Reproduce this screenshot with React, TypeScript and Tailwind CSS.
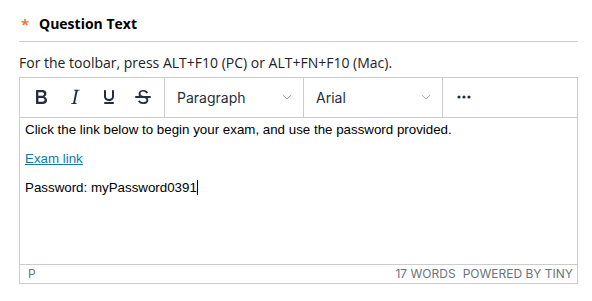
import React from 'react';

const ICON = '#222f3e';

const BoldIcon = () => (
    <svg width="24" height="24" viewBox="0 0 24 24" fill={ICON}>
        <path d="M7.8 19c-.3 0-.5 0-.6-.2l-.2-.5V5.7c0-.2 0-.4.2-.5l.6-.2h5c1.5 0 2.7.3 3.5 1 .7.6 1.1 1.4 1.1 2.5a3 3 0 01-.6 1.9c-.4.6-1 1-1.6 1.2.4.1.9.3 1.3.6s.8.7 1 1.2c.4.4.5 1 .5 1.6 0 1.3-.4 2.3-1.3 3-.8.7-2.1 1-3.8 1H7.8zm5-8.3c.6 0 1.2-.1 1.6-.5.4-.3.6-.7.6-1.3 0-1.1-.8-1.7-2.3-1.7H9.3v3.5h3.4zm.5 6c.7 0 1.3-.1 1.7-.4.4-.4.6-.9.6-1.5s-.2-1-.7-1.4c-.4-.3-1-.4-2-.4H9.4v3.8h4z" fillRule="evenodd" />
    </svg>
);

const ItalicIcon = () => (
    <svg width="24" height="24" viewBox="0 0 24 24" fill={ICON}>
        <path d="M16.7 4.7l-.1.9h-.3c-.6 0-1 0-1.4.3-.3.3-.4.6-.5 1.1l-2.1 9.8v.6c0 .5.4.8 1.4.8h.2l-.2.8H8l.2-.8h.2c1.1 0 1.8-.5 2-1.5l2-9.8.1-.5c0-.6-.4-.8-1.4-.8h-.3l.2-.9h5.8z" fillRule="evenodd" />
    </svg>
);

const UnderlineIcon = () => (
    <svg width="24" height="24" viewBox="0 0 24 24" fill={ICON}>
        <path d="M16 5c.6 0 1 .4 1 1v5.5a4 4 0 01-.4 1.8l-1 1.4a5.3 5.3 0 01-5.5 1 5 5 0 01-1.6-1c-.5-.4-.8-.9-1.1-1.4a4 4 0 01-.4-1.8V6c0-.6.4-1 1-1s1 .4 1 1v5.5c0 .3 0 .6.2 1l.6.7a3.3 3.3 0 002.2.8 3.4 3.4 0 002.2-.8c.3-.2.4-.5.6-.8l.2-.9V6c0-.6.4-1 1-1zM8 17h8c.6 0 1 .4 1 1s-.4 1-1 1H8a1 1 0 010-2z" fillRule="evenodd" />
    </svg>
);

const StrikeIcon = () => (
    <svg width="24" height="24" viewBox="0 0 24 24" fill={ICON}>
        <path d="M15.6 8.5c-.5-.7-1-1.1-1.3-1.3-.6-.4-1.3-.6-2-.6-2.7 0-2.8 1.7-2.8 2.1 0 1.6 1.8 2 3.2 2.3 4.4.9 4.6 2.8 4.6 3.9 0 1.4-.7 4.1-5 4.1A6.2 6.2 0 017 16.4l1.5-1.1c.4.6 1.6 2 3.7 2 1.6 0 2.5-.4 3-1.2.4-.8.3-2-.8-2.6-.7-.4-1.6-.7-2.9-1-1-.2-3.9-.8-3.9-3.6C7.6 6 10.3 5 12.4 5c2.9 0 4.2 1.6 4.7 2.4l-1.5 1.1z" fillRule="evenodd" />
        <path d="M5 11h14a1 1 0 010 2H5a1 1 0 010-2z" />
    </svg>
);

const MoreIcon = () => (
    <svg width="24" height="24" viewBox="0 0 24 24" fill={ICON}>
        <circle cx="7" cy="12" r="1.6" />
        <circle cx="12" cy="12" r="1.6" />
        <circle cx="17" cy="12" r="1.6" />
    </svg>
);

const Chevron = () => (
    <svg width="10" height="10" viewBox="0 0 10 10" fill="none">
        <path d="M0.8 3l4.2 4 4.2-4" stroke="#a3a8ae" strokeWidth="1" />
    </svg>
);

const ToolButton = ({ children }: { children: React.ReactNode }) => (
    <button className="w-[34px] h-[34px] mt-[2px] mb-[3px] flex items-center justify-center rounded-[3px]">
        {children}
    </button>
);

const SelectButton = ({ label }: { label: string }) => (
    <button className="w-[130px] h-[34px] mt-[2px] mb-[3px] flex items-center pl-[8px] pr-[7px] text-[14px] text-[#222f3e]">
        <span className="flex-1 text-left">{label}</span>
        <Chevron />
    </button>
);

export default function App() {
    return (
        <div className="w-[592px] h-[301px] bg-white pl-[19px] pr-[14px]" style={{ fontFamily: '"Open Sans", sans-serif' }}>
            <div className="pt-[14px] pb-[7px] border-b border-[#cccccc] flex items-center h-[42px]">
                <span className="w-[20px] pl-[2px] text-[15px] leading-[20px] font-bold text-[#f47c20]">*</span>
                <span className="text-[14px] leading-[20px] font-bold text-black">Question Text</span>
            </div>
            <p className="mt-[11px] text-[14px] leading-[20px] text-[#222222]">
                For the toolbar, press ALT+F10 (PC) or ALT+FN+F10 (Mac).
            </p>
            <div className="mt-[4px] h-[207px] border border-[#cccccc] flex flex-col">
                <div className="h-[40px] border-b border-[#cccccc] flex" style={{ fontFamily: 'Inter, sans-serif' }}>
                    <div className="flex px-[4px] border-r border-[#cccccc]">
                        <ToolButton><BoldIcon /></ToolButton>
                        <ToolButton><ItalicIcon /></ToolButton>
                        <ToolButton><UnderlineIcon /></ToolButton>
                        <ToolButton><StrikeIcon /></ToolButton>
                    </div>
                    <div className="flex px-[4px] border-r border-[#cccccc]">
                        <SelectButton label="Paragraph" />
                    </div>
                    <div className="flex px-[4px] border-r border-[#cccccc]">
                        <SelectButton label="Arial" />
                    </div>
                    <div className="flex px-[4px]">
                        <ToolButton><MoreIcon /></ToolButton>
                    </div>
                </div>
                <div className="flex-1 pt-[4px] pl-[5px] text-[13.33px] leading-[16px] text-black" style={{ fontFamily: '"Liberation Sans", Arial, sans-serif' }}>
                    <p className="mb-[13px]">Click the link below to begin your exam, and use the password provided.</p>
                    <p className="mb-[13px]"><a className="text-[#1479a8] underline">Exam link</a></p>
                    <p>Password: myPassword0391<span className="inline-block w-px h-[15px] bg-black align-[-3px]" /></p>
                </div>
                <div className="h-[19px] border-t border-[#cccccc] flex items-center justify-between pl-[8px] pr-[4px] text-[12px] uppercase text-[#6b737c]" style={{ fontFamily: 'Inter, sans-serif' }}>
                    <span>p</span>
                    <span>17 words<span className="ml-[7px]">Powered by Tiny</span></span>
                </div>
            </div>
        </div>
    );
}
